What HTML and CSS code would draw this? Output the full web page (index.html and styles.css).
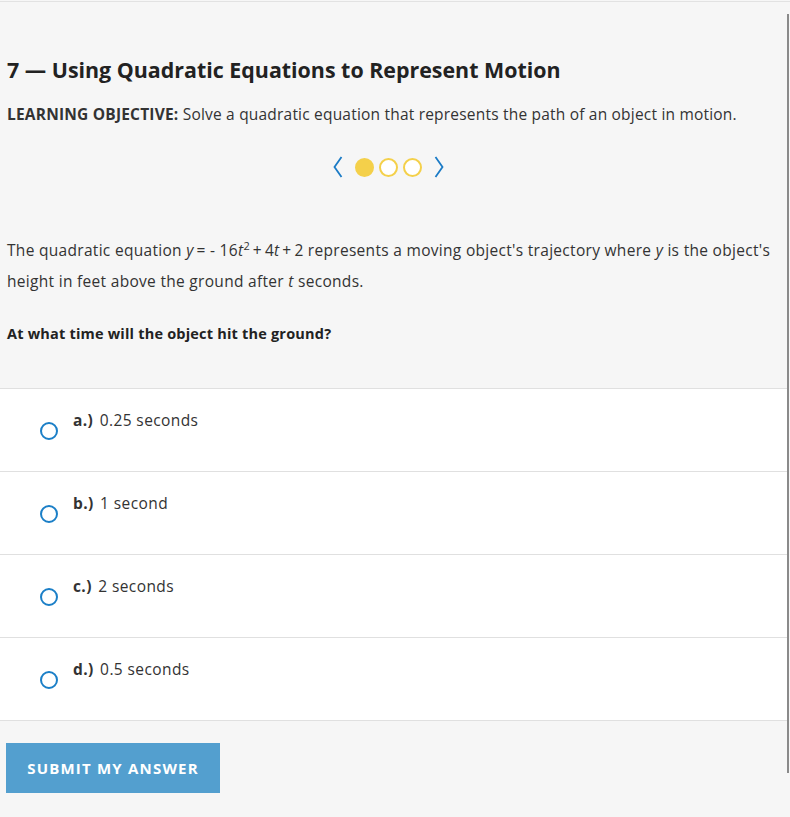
FILE: index.html
```html
<!DOCTYPE html>
<html lang="en">
<head>
<meta charset="utf-8">
<title>Using Quadratic Equations to Represent Motion</title>
<link rel="stylesheet" href="styles.css">
</head>
<body>
<div class="topline"></div>
<main class="page">
  <header class="intro">
    <h1 class="title">7 — Using Quadratic Equations to Represent Motion</h1>
    <p class="objective"><strong>LEARNING OBJECTIVE:</strong> Solve a quadratic equation that represents the path of an object in motion.</p>
  </header>

  <nav class="pager" aria-label="Questions">
    <svg class="chev" width="10" height="22" viewBox="0 0 10 22"><path d="M8.5 1 L1.5 11 L8.5 21" fill="none" stroke="#1b7bc6" stroke-width="1.8"/></svg>
    <span class="dot dot-active"></span>
    <span class="dot"></span>
    <span class="dot"></span>
    <svg class="chev" width="10" height="22" viewBox="0 0 10 22"><path d="M1.5 1 L8.5 11 L1.5 21" fill="none" stroke="#1b7bc6" stroke-width="1.8"/></svg>
  </nav>

  <section class="question">
    <p class="prompt">The quadratic equation <i>y</i>&thinsp;= - 16<i>t</i><sup>2</sup>&thinsp;+&thinsp;4<i>t</i>&thinsp;+&thinsp;2 represents a moving object's trajectory where <i>y</i> is the object's height in feet above the ground after <i>t</i> seconds.</p>
    <p class="ask">At what time will the object hit the ground?</p>
  </section>
</main>

<ul class="options">
  <li class="option"><span class="radio"></span><span class="label"><b>a.)</b> 0.25 seconds</span></li>
  <li class="option"><span class="radio"></span><span class="label"><b>b.)</b> 1 second</span></li>
  <li class="option"><span class="radio"></span><span class="label"><b>c.)</b> 2 seconds</span></li>
  <li class="option"><span class="radio"></span><span class="label"><b>d.)</b> 0.5 seconds</span></li>
</ul>

<div class="actions">
  <button class="submit" type="button">SUBMIT MY ANSWER</button>
</div>

<div class="scrollbar"></div>
</body>
</html>
```

FILE: styles.css
```css
html, body {
  margin: 0;
  padding: 0;
}
body {
  background: #f6f6f6;
  font-family: "Open Sans", Lato, sans-serif;
  color: #333;
  padding-top: 1px;
  position: relative;
  min-height: 816px;
}
.topline {
  height: 1px;
  background: #e2e2e2;
}
.page {
  padding: 0 7px;
}
.intro {
  padding-top: 53px;
}
.title {
  margin: 0;
  font-size: 21.4px;
  line-height: 30px;
  font-weight: 700;
  color: #222;
}
.objective {
  margin: 19px 0 0;
  font-size: 15.5px;
  letter-spacing: 0.2px;
  line-height: 20px;
  color: #333;
}
.objective strong {
  font-weight: 700;
}
.pager {
  display: flex;
  justify-content: center;
  align-items: center;
  gap: 5px;
  margin-top: 31px;
  padding-right: 13px;
  height: 24px;
}
.chev {
  display: block;
  margin: 0 7px;
}
.dot {
  width: 15px;
  height: 15px;
  border-radius: 50%;
  border: 2.5px solid #f4d04a;
  background: #fff;
}
.dot-active {
  background: #f4d04a;
}
.question {
  padding-top: 56px;
}
.prompt {
  margin: 0;
  font-size: 15.5px;
  letter-spacing: 0.3px;
  line-height: 31px;
  color: #333;
}
.prompt sup {
  font-size: 11px;
  line-height: 0;
}
.ask {
  margin: 27px 0 0;
  font-size: 14.5px;
  letter-spacing: 0.2px;
  line-height: 20px;
  font-weight: 700;
  color: #222;
}
.options {
  list-style: none;
  margin: 44px 3px 0 0;
  padding: 0;
  background: #fff;
  border-top: 1px solid #e0e0e0;
}
.option {
  display: flex;
  align-items: flex-start;
  height: 82px;
  border-bottom: 1px solid #e0e0e0;
}
.radio {
  flex: none;
  width: 14px;
  height: 14px;
  border: 2px solid #1b7fc7;
  border-radius: 50%;
  margin: 33px 15px 0 40px;
}
.label {
  margin-top: 21px;
  font-size: 15.5px;
  letter-spacing: 0.4px;
  line-height: 20px;
  color: #333;
}
.label b {
  font-weight: 700;
  margin-right: 2px;
}
.actions {
  padding: 22px 6px 0;
}
.submit {
  width: 214px;
  height: 50px;
  border: 0;
  background: #539fcf;
  color: #fff;
  font-family: "Open Sans", Lato, sans-serif;
  font-size: 15px;
  font-weight: 700;
  letter-spacing: 1.2px;
  padding: 0;
}
.scrollbar {
  position: absolute;
  left: 787px;
  top: 14px;
  width: 2px;
  height: 759px;
  background: #8a8a8a;
}
```
